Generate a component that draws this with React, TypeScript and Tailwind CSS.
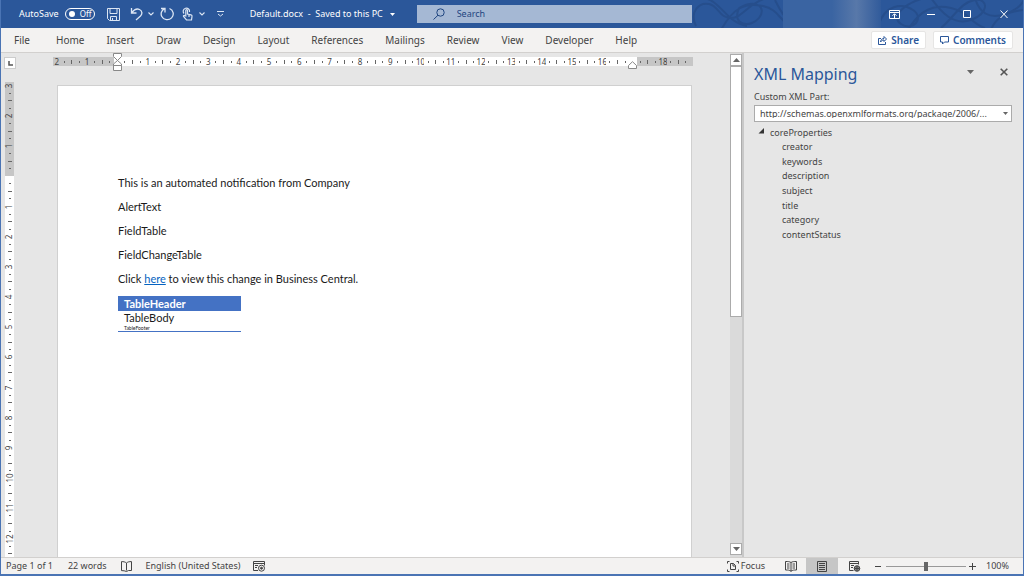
import type { ReactNode } from "react";
import clsx from "clsx";

const tabs = [
  "File", "Home", "Insert", "Draw", "Design", "Layout", "References",
  "Mailings", "Review", "View", "Developer", "Help",
];

const properties = [
  "creator", "keywords", "description", "subject", "title", "category", "contentStatus",
];

function Icon({ w, h, children, className }: { w: number; h: number; children: ReactNode; className?: string }) {
  return (
    <svg
      width={w}
      height={h}
      viewBox={`0 0 ${w} ${h}`}
      fill="none"
      stroke="currentColor"
      className={clsx("shrink-0", className)}
      aria-hidden="true"
    >
      {children}
    </svg>
  );
}

function Chevron() {
  return (
    <Icon w={6} h={4}>
      <path d="M.5.5 3 3 5.5.5" strokeWidth="1.1" />
    </Icon>
  );
}

function Caret({ className }: { className?: string }) {
  return (
    <Icon w={7} h={4} className={className}>
      <path d="M0 0h7L3.5 4z" fill="currentColor" stroke="none" />
    </Icon>
  );
}

/* One quarter of a centimetre: number, dot, tick, dot */
function Mark({ index, start, vertical, hidden }: { index: number; start: number; vertical?: boolean; hidden?: boolean }) {
  if (hidden) return null;
  const step = index % 4;
  if (step === 0) {
    return (
      <span className={clsx("whitespace-nowrap text-[8px] leading-none", vertical && "-rotate-90")}>
        {Math.abs(start + index / 4)}
      </span>
    );
  }
  if (step === 2) return <span className={clsx("bg-[#666]", vertical ? "h-px w-1" : "h-1 w-px")} />;
  return <span className={clsx("bg-[#666]", vertical ? "h-px w-0.5" : "h-0.5 w-px")} />;
}

function HorizontalRuler() {
  return (
    <div className="relative mr-[38px] ml-[52px] flex h-[9px] text-[#444]">
      {Array.from({ length: 84 }, (_, i) => (
        <span
          key={i}
          className={clsx("flex min-w-0 flex-1 items-center justify-center", i < 8 || i > 76 ? "bg-[#c6c6c6]" : "bg-white")}
        >
          <Mark index={i} start={-2} hidden={i === 8 || i === 76} />
        </span>
      ))}
      <span className="w-[3px] bg-[#c6c6c6]" />
      {/* indent markers sit on top of the scale */}
      <Icon w={9} h={18} className="absolute -top-1 left-[9.4%]">
        <path d="M.5.5h8v3l-4 4-4-4zM4.5 7.500l4 3.500v1.500h-8V11zM.5 12.500h8v5h-8z" fill="#fff" stroke="#888" />
      </Icon>
      <Icon w={9} h={8} className="absolute top-1 left-[90%]">
        <path d="M4.500.7l4 3.800v3h-8v-3z" fill="#fff" stroke="#888" />
      </Icon>
    </div>
  );
}

function VerticalRuler() {
  return (
    <div className="mt-[6px] ml-1 flex w-[9px] flex-col text-[#444]">
      {Array.from({ length: 63 }, (_, i) => (
        <span
          key={i}
          className={clsx(
            "flex min-h-0 flex-1 items-center justify-center",
            i < 12 ? "bg-[#c6c6c6]" : i > 12 ? "bg-white" : "bg-linear-to-b from-[#c6c6c6] from-50% to-white to-50%",
          )}
        >
          <Mark index={i} start={-3} vertical hidden={i === 12} />
        </span>
      ))}
    </div>
  );
}

function TitleBar() {
  return (
    <header className="relative flex h-7 shrink-0 items-center overflow-hidden bg-[#2b579a] text-[9px] text-white">
      <svg className="absolute top-0 right-0 h-7 w-[332px]" viewBox="0 0 332 28" fill="none" stroke="#264e8c" strokeWidth="2" aria-hidden="true">
        <path d="M5 26C-2 12 8 2 18 4s10 14 22 14S58 2 76-2M12-2c18 2 22 24 44 28M30 30C42 8 54 2 72 6s16 18 34 22M48 8c18-10 28 0 20 10s-28 8-20-10M84 0c6 12 10 20 26 30" />
        <path d="M188 24c6-18 22-22 34-14s0 22-12 14 6-22 24-26M218 28c12-18 24-24 42-20s20 16 34 20M240-2c10 14 22 28 40 22s18-22 4-20-20 16-34 28M284-2c4 14 14 22 30 16s18-12 20-16M300 30c4-12 14-18 32-20" />
      </svg>

      <label className="relative ml-[18px] flex items-center gap-[6px]">
        AutoSave
        <input type="checkbox" className="peer sr-only" />
        <span className="flex h-3 w-[30px] items-center gap-[5px] rounded-full border border-white pl-[3px] text-[8px]">
          <span className="size-[6px] rounded-full bg-white" />
          Off
        </span>
      </label>

      <div className="relative ml-3 flex items-center text-[#dbe5f3]">
        <button aria-label="Save">
          <Icon w={13} h={13}>
            <path d="M.5.5h12v12h-10l-2-2zM3 .5v5h7v-5M3.500 12.500v-4h6v4M5.500 10v2.500" />
          </Icon>
        </button>
        <button aria-label="Undo" className="ml-[10px]">
          <Icon w={14} h={14}>
            <path d="M1.500 1v5h5M1.800 5.700C4 2.800 7 1.300 9.500 2.500c3 1.500 3 4.500 1 6.500L6 13" strokeWidth="1.300" />
          </Icon>
        </button>
        <button aria-label="Undo history" className="ml-1"><Chevron /></button>
        <button aria-label="Repeat" className="ml-[6px]">
          <Icon w={14} h={14}>
            <path d="M1 1.500h4V5.500M4.800 1.700C1.500 3 .3 6.500 1.800 9.500c1.800 3.600 7 4.300 9.800 1.400 2.800-3 1.900-7.800-2.100-9.400" strokeWidth="1.300" />
          </Icon>
        </button>
        <button aria-label="Touch mode" className="ml-2">
          <Icon w={11} h={14}>
            <path d="M2 6.500A3.200 3.200 0 1 1 7.500 5M3.800 9V3.500c0-1.200 1.700-1.200 1.700 0V7l3.500.8c.8.2 1.200.7 1 1.600L9.500 13h-5L1.500 9.500c-.5-1 .6-1.400 1.300-.8zM7 7.500V10" strokeWidth="1.200" />
          </Icon>
        </button>
        <button aria-label="Touch mode options" className="ml-[6px]"><Chevron /></button>
        <button aria-label="Customize toolbar" className="ml-3">
          <Icon w={7} h={6}>
            <path d="M0 .5h7M1 3l2.500 2L6 3" />
          </Icon>
        </button>
      </div>

      <button className="relative ml-[26px] flex w-[145px] items-center justify-between whitespace-nowrap">
        <span>Default.docx&nbsp; -&nbsp; Saved to this PC</span>
        <Icon w={5} h={3}>
          <path d="M0 0h5L2.500 3z" fill="currentColor" stroke="none" />
        </Icon>
      </button>

      <label className="relative ml-[22px] flex h-[18px] flex-1 items-center gap-3 bg-[#a5b8d4] pl-4 text-[#1f4580]">
        <Icon w={12} h={12}>
          <circle cx="7.500" cy="4.500" r="3.700" />
          <path d="M5 7.200.5 11.500" />
        </Icon>
        <input
          type="search"
          placeholder="Search"
          aria-label="Search"
          className="w-full min-w-0 bg-transparent outline-none placeholder:text-[#1f4580]"
        />
      </label>

      <div className="relative flex w-[331px] items-center self-stretch">
        <div className="ml-[91px] h-full w-[98px] bg-linear-to-r from-[#3a64a2] from-50% via-[#5878a9] via-75% to-[#315b9b]" />
        <button aria-label="Ribbon display options" className="ml-2">
          <Icon w={11} h={9}>
            <path d="M.5.5h10v8H.5zM.5 2.500h10M5.500 8V4M3.500 5.700l2-2 2 2" />
          </Icon>
        </button>
        <button aria-label="Minimize" className="ml-[27px]">
          <Icon w={8} h={9}><path d="M0 4.500h8" /></Icon>
        </button>
        <button aria-label="Maximize" className="ml-[28px]">
          <Icon w={8} h={9}><path d="M.5.500h7v7h-7z" /></Icon>
        </button>
        <button aria-label="Close" className="ml-[29px]">
          <Icon w={8} h={9}><path d="m.5.5 7 7.500M7.500.5.5 8" /></Icon>
        </button>
      </div>
    </header>
  );
}

function RibbonTabs() {
  return (
    <nav className="flex h-[25px] shrink-0 items-center border-b border-[#d2d0ce] bg-[#f3f2f1] pr-[10px] pl-[13px] text-[10px] text-[#444]">
      <div className="flex flex-1 gap-[22px]">
        {tabs.map((tab) => (
          <button key={tab} className="first:mr-1">{tab}</button>
        ))}
      </div>
      <div className="flex gap-[7px] font-semibold text-[#2b579a]">
        <button className="flex h-[18px] items-center gap-1 rounded-xs border border-[#e6e5e4] bg-white px-[6px]">
          <Icon w={9} h={10}>
            <path d="M3 3.500H.5v6h7V7M2.500 7c.3-2.500 1.500-3.500 3.500-3.500v-2L8.500 4 6 6.500V5C4.500 5 3.500 5.500 2.500 7z" />
          </Icon>
          Share
        </button>
        <button className="flex h-[18px] items-center gap-1 rounded-xs border border-[#e6e5e4] bg-white px-[6px]">
          <Icon w={9} h={9}>
            <path d="M.5.500h8v5.500H4.500L2.500 8V6h-2z" />
          </Icon>
          Comments
        </button>
      </div>
    </nav>
  );
}

function DocumentPage() {
  return (
    <article className="mt-[9px] ml-[43px] flex-1 border border-b-0 border-[#d0d0d0] bg-white pt-[89px] pl-[60px] font-['Lato',sans-serif] text-[11px] leading-4 text-[#1a1a1a]">
      <div className="flex flex-col gap-2">
        <p>This is an automated notification from Company</p>
        <p>AlertText</p>
        <p>FieldTable</p>
        <p>FieldChangeTable</p>
        <p>Click <a href="#here" className="text-[#0563c1] underline">here</a> to view this change in Business Central.</p>
      </div>
      <table className="mt-[9px] w-[123px] border-b border-[#4472c4] text-left">
        <thead>
          <tr><th className="h-[15px] bg-[#4472c4] py-0 pl-[6px] leading-[14px] font-bold text-white">TableHeader</th></tr>
        </thead>
        <tbody>
          <tr><td className="py-0 pl-[6px] leading-[14px]">TableBody</td></tr>
        </tbody>
        <tfoot>
          <tr><td className="py-0 pl-[6px] text-[5px] leading-[6px]">TableFooter</td></tr>
        </tfoot>
      </table>
    </article>
  );
}

function ScrollBar() {
  return (
    <div className="flex w-3 shrink-0 flex-col bg-[#dadada] pb-[2px] text-[#666]">
      <button aria-label="Scroll up" className="mt-px flex h-3 items-center justify-center border border-[#ababab] bg-white">
        <Caret className="rotate-180" />
      </button>
      <div className="h-[251px] border border-[#ababab] bg-white" />
      <button aria-label="Scroll down" className="mt-auto flex h-3 items-center justify-center border border-[#ababab] bg-white">
        <Caret />
      </button>
    </div>
  );
}

function XmlMappingPane() {
  return (
    <aside className="w-[281px] shrink-0 border-l-2 border-[#c8c8c8] pr-[11px] pl-[10px] text-[9px] text-[#444]">
      <div className="flex items-start pt-[9px] pr-1">
        <h2 className="flex-1 text-base leading-6 text-[#2b579a]">XML Mapping</h2>
        <button aria-label="Pane options" className="mt-2 text-[#666]"><Caret /></button>
        <button aria-label="Close pane" className="mt-[6px] ml-[26px] text-[#555]">
          <Icon w={8} h={8}><path d="m.7.7 6.600 6.600M7.300.7.7 7.300" strokeWidth="1.600" /></Icon>
        </button>
      </div>
      <label htmlFor="part" className="mt-[3px] block leading-4">Custom XML Part:</label>
      <div className="relative">
        <select id="part" className="block h-[17px] w-full appearance-none border border-[#ababab] bg-white pl-[5px] leading-none">
          <option>http://schemas.openxmlformats.org/package/2006/...</option>
        </select>
        <Icon w={5} h={3} className="pointer-events-none absolute top-[7px] right-1">
          <path d="M0 0h5L2.500 3z" fill="#666" stroke="none" />
        </Icon>
      </div>
      <button className="mt-1 flex items-center gap-[6px] pl-1 leading-[14px]">
        <Icon w={6} h={6} className="mb-1">
          <path d="M6 0v5.500H.5z" fill="#333" stroke="none" />
        </Icon>
        coreProperties
      </button>
      <ul className="flex h-[102px] flex-col justify-between pl-7 leading-[14px]">
        {properties.map((name) => (
          <li key={name}>{name}</li>
        ))}
      </ul>
    </aside>
  );
}

function StatusBar() {
  return (
    <footer className="flex h-[17px] shrink-0 items-center border-t border-[#d2d0ce] bg-[#f3f2f1] text-[9px] text-[#444]">
      <span className="ml-[5px]">Page 1 of 1</span>
      <span className="ml-[15px]">22 words</span>
      <button aria-label="Proofing" className="ml-[14px]">
        <Icon w={12} h={11}>
          <path d="M5.500 9.500V2C4 .8 2.500.6.500.6v9c2 0 3.500.2 5 .9M5.500 2C7 .8 8 .6 10.500.6V9.500H7.500L5.500 10.500" />
        </Icon>
      </button>
      <span className="ml-[13px]">English (United States)</span>
      <button aria-label="Macros" className="ml-[13px]">
        <Icon w={13} h={11}>
          <path d="M5 9.500H.5v-9h11v4M.5 2.500h11M2 4.500h3M2 6.500h2" />
          <circle cx="8.500" cy="7.200" r="3" />
          <circle cx="8.500" cy="7.200" r="1" fill="currentColor" />
        </Icon>
      </button>

      <button className="ml-auto flex items-center gap-[2px]">
        <Icon w={12} h={11}>
          <path d="M2.500.5h-2v2M9.500.5h2v2M.5 8.500v2h2M9.500 10.500h2v-2M3.500 2.500h3l2 2v4h-5zM6 2.500V5h2.500" />
        </Icon>
        Focus
      </button>
      <button aria-label="Read mode" className="ml-5">
        <Icon w={12} h={11}>
          <path d="M6 1.500v9M6 1.500C4.500.5 3 .5.500.5v8.500c2.500 0 4 0 5.500 1.200C7.500 9 9 9 11.500 9V.5C9 .5 7.500.5 6 1.500M2 3h2.500M2 5h2.500M2 7h2.500M7.500 3H10M7.500 5H10M7.500 7H10" />
        </Icon>
      </button>
      <button aria-label="Print layout" className="ml-[9px] flex h-4 w-8 items-center justify-center bg-[#c6c6c6]">
        <Icon w={10} h={11}>
          <path d="M.5.5h9v10h-9zM2 2.500h6M2 4.500h6M2 6.500h6M2 8.500h6" />
        </Icon>
      </button>
      <button aria-label="Web layout" className="ml-[11px]">
        <Icon w={12} h={11}>
          <path d="M4.500 9.500h-4v-9h9v3M.5 2.500h9M2 4.500h3M2 6.500h2" />
          <circle cx="8" cy="7.500" r="2.800" fill="#888" />
          <path d="M5.500 7.500h5M8 5v5" />
        </Icon>
      </button>
      <button aria-label="Zoom out" className="ml-[14px]">
        <Icon w={6} h={7}><path d="M0 3.500h6" /></Icon>
      </button>
      <input
        type="range"
        aria-label="Zoom"
        defaultValue={50}
        className="mr-[3px] ml-[5px] h-[9px] w-20 appearance-none bg-linear-to-b from-transparent from-45% via-[#999] via-50% to-transparent to-55% [&::-webkit-slider-thumb]:h-[9px] [&::-webkit-slider-thumb]:w-1 [&::-webkit-slider-thumb]:appearance-none [&::-webkit-slider-thumb]:bg-[#666]"
      />
      <button aria-label="Zoom in">
        <Icon w={7} h={7}><path d="M0 3.500h7M3.500 0v7" /></Icon>
      </button>
      <button className="mr-[14px] ml-[10px]">100%</button>
    </footer>
  );
}

export default function App() {
  return (
    <div className="flex h-screen flex-col overflow-hidden border-x border-b-2 border-[#4a74b4] bg-[#e6e6e6] font-['Noto_Sans','Open_Sans',sans-serif]">
      <TitleBar />
      <RibbonTabs />
      <main className="flex min-h-0 flex-1">
        <section className="flex min-w-0 flex-1 flex-col pt-1">
          <div className="relative">
            <HorizontalRuler />
            <button aria-label="Tab selector" className="absolute top-0 left-[3px] flex size-3 items-center justify-center border border-[#ccc] bg-white">
              <Icon w={5} h={5}><path d="M1 0v4h4" strokeWidth="1.500" className="text-[#555]" /></Icon>
            </button>
          </div>
          <div className="flex min-h-0 flex-1 pt-[10px] pr-[38px]">
            <VerticalRuler />
            <DocumentPage />
          </div>
        </section>
        <ScrollBar />
        <XmlMappingPane />
      </main>
      <StatusBar />
    </div>
  );
}
